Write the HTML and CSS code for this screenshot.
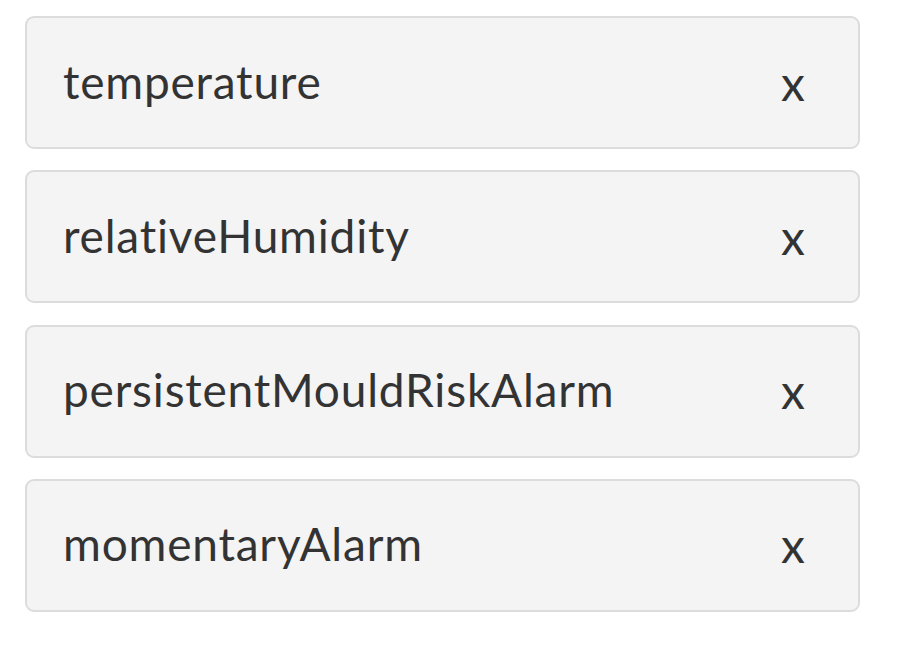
FILE: index.html
```html
<!DOCTYPE html>
<html>
<head>
<meta charset="utf-8">
<link rel="stylesheet" href="styles.css">
</head>
<body>
<ul class="list">
  <li class="item"><span class="label">temperature</span><span class="remove">x</span></li>
  <li class="item"><span class="label">relativeHumidity</span><span class="remove">x</span></li>
  <li class="item"><span class="label">persistentMouldRiskAlarm</span><span class="remove">x</span></li>
  <li class="item"><span class="label">momentaryAlarm</span><span class="remove">x</span></li>
</ul>
</body>
</html>
```
FILE: styles.css
```css
html, body {
  margin: 0;
  padding: 0;
  background: #ffffff;
}
body {
  font-family: Lato, "Liberation Sans", sans-serif;
  color: #333333;
}
.list {
  list-style: none;
  margin: 0;
  padding: 16px 38px 0 25px;
  display: flex;
  flex-direction: column;
  gap: 21.3px;
}
.item {
  box-sizing: border-box;
  height: 133px;
  display: flex;
  align-items: center;
  justify-content: space-between;
  padding: 0 53px 0 36px;
  background: #f4f4f4;
  border: 2px solid #dcdcdc;
  border-radius: 9px;
  font-size: 46px;
  font-variant-ligatures: none;
}
.label {
  line-height: 1;
  margin-top: -2px;
  letter-spacing: 0.8px;
}
.remove {
  line-height: 1;
  margin-top: 0;
  font-size: 48px;
}
```
